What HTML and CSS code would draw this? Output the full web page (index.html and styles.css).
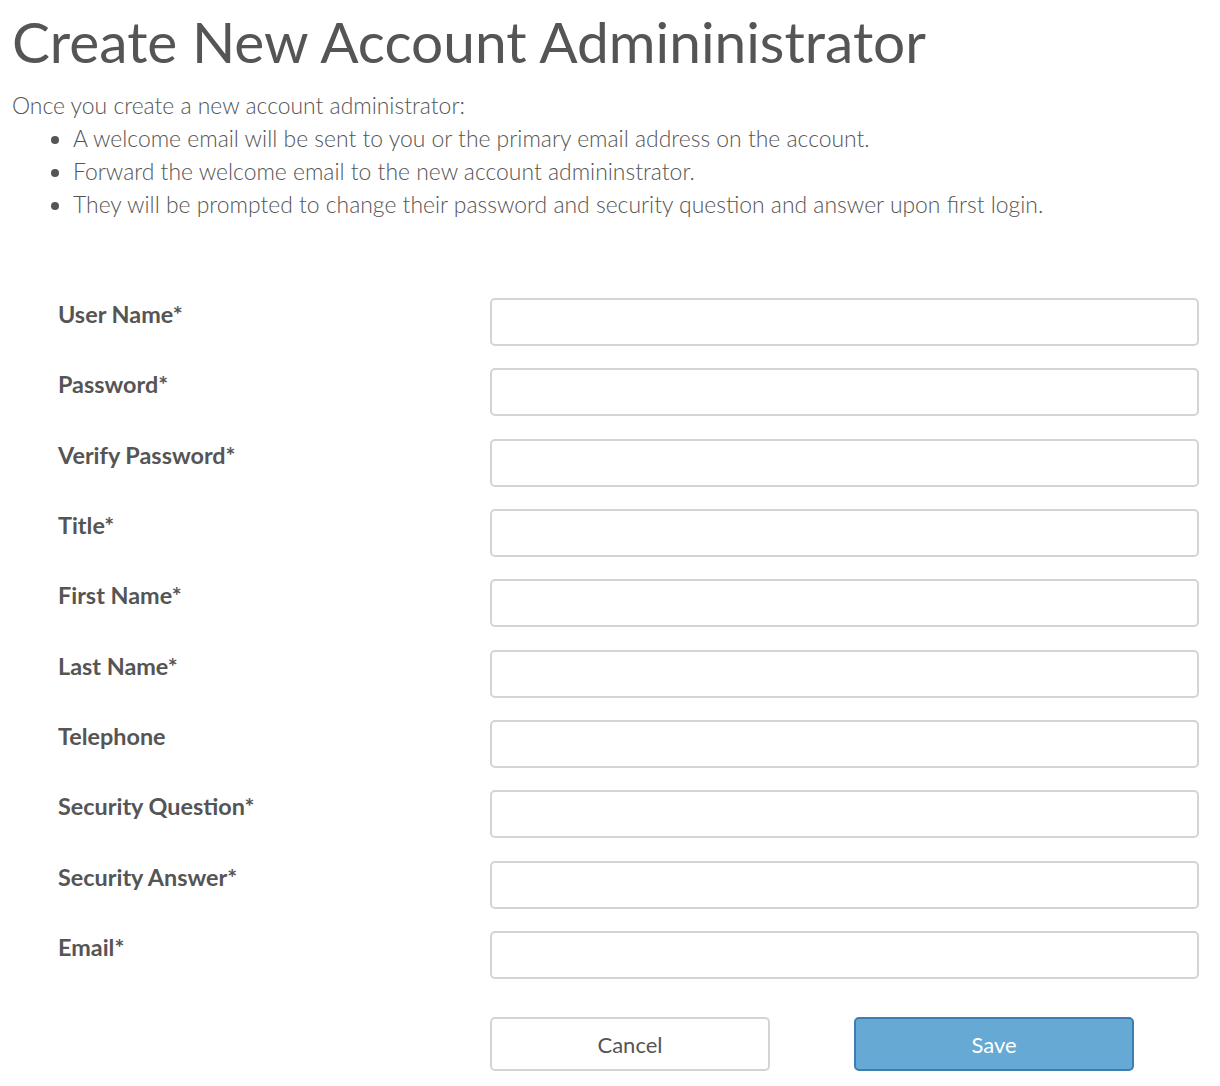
FILE: index.html
```html
<!DOCTYPE html>
<html lang="en">
<head>
  <meta charset="UTF-8">
  <title>Create New Account Administrator</title>
  <link rel="stylesheet" href="styles.css">
</head>
<body>
<article>
  <h1>Create New Account Admininistrator</h1>
  <div class="intro">
    <p>Once you create a new account administrator:</p>
    <ul>
      <li>A welcome email will be sent to you or the primary email address on the account.</li>
      <li>Forward the welcome email to the new account admininstrator.</li>
      <li>They will be prompted to change their password and security question and answer upon first login.</li>
    </ul>
  </div>
  <form class="admin-form">
    <label for="username">User Name*</label>
    <input id="username" type="text">
    <label for="password">Password*</label>
    <input id="password" type="password">
    <label for="verify">Verify Password*</label>
    <input id="verify" type="password">
    <label for="title">Title*</label>
    <input id="title" type="text">
    <label for="first">First Name*</label>
    <input id="first" type="text">
    <label for="last">Last Name*</label>
    <input id="last" type="text">
    <label for="phone">Telephone</label>
    <input id="phone" type="text">
    <label for="question">Security Question*</label>
    <input id="question" type="text">
    <label for="answer">Security Answer*</label>
    <input id="answer" type="text">
    <label for="email">Email*</label>
    <input id="email" type="text">
    <div class="actions">
      <button type="button" class="btn btn-cancel">Cancel</button>
      <button type="button" class="btn btn-save">Save</button>
    </div>
  </form>
</article>
</body>
</html>
```

FILE: styles.css
```css
body {
  margin: 0;
  padding: 0;
  background: #fff;
  color: #555;
  font-family: Lato, "Open Sans", sans-serif;
}

article {
  padding: 0 12px;
}

article h1 {
  margin: 0;
  padding-top: 6px;
  font-size: 56.8px;
  font-weight: 400;
  line-height: 70px;
  color: #555;
}

.intro {
  margin-top: 13px;
  font-size: 22.9px;
  font-weight: 300;
  line-height: 33px;
}

.intro p {
  margin: 0;
}

.intro ul {
  margin: 0;
  padding-left: 61px;
}

.admin-form {
  display: grid;
  grid-template-columns: 432px 709px;
  row-gap: 22.33px;
  margin-top: 77px;
  padding-left: 46px;
}

.admin-form label {
  font-size: 23.4px;
  font-weight: 700;
  line-height: 30px;
  padding-top: 1px;
}

.admin-form input {
  height: 48px;
  box-sizing: border-box;
  border: 2px solid #d4d4d4;
  border-radius: 5px;
  background: #fff;
}

.actions {
  grid-column: 2;
  display: flex;
  gap: 84px;
  margin-top: 16px;
}

.btn {
  width: 280px;
  height: 54px;
  font-family: Lato, sans-serif;
  font-size: 22px;
  border-radius: 5px;
  cursor: pointer;
}

.btn-cancel {
  background: #fff;
  border: 2px solid #d4d4d4;
  color: #555;
}

.btn-save {
  background: #65a9d4;
  border: 2px solid #3f7db0;
  color: #fff;
}
```
